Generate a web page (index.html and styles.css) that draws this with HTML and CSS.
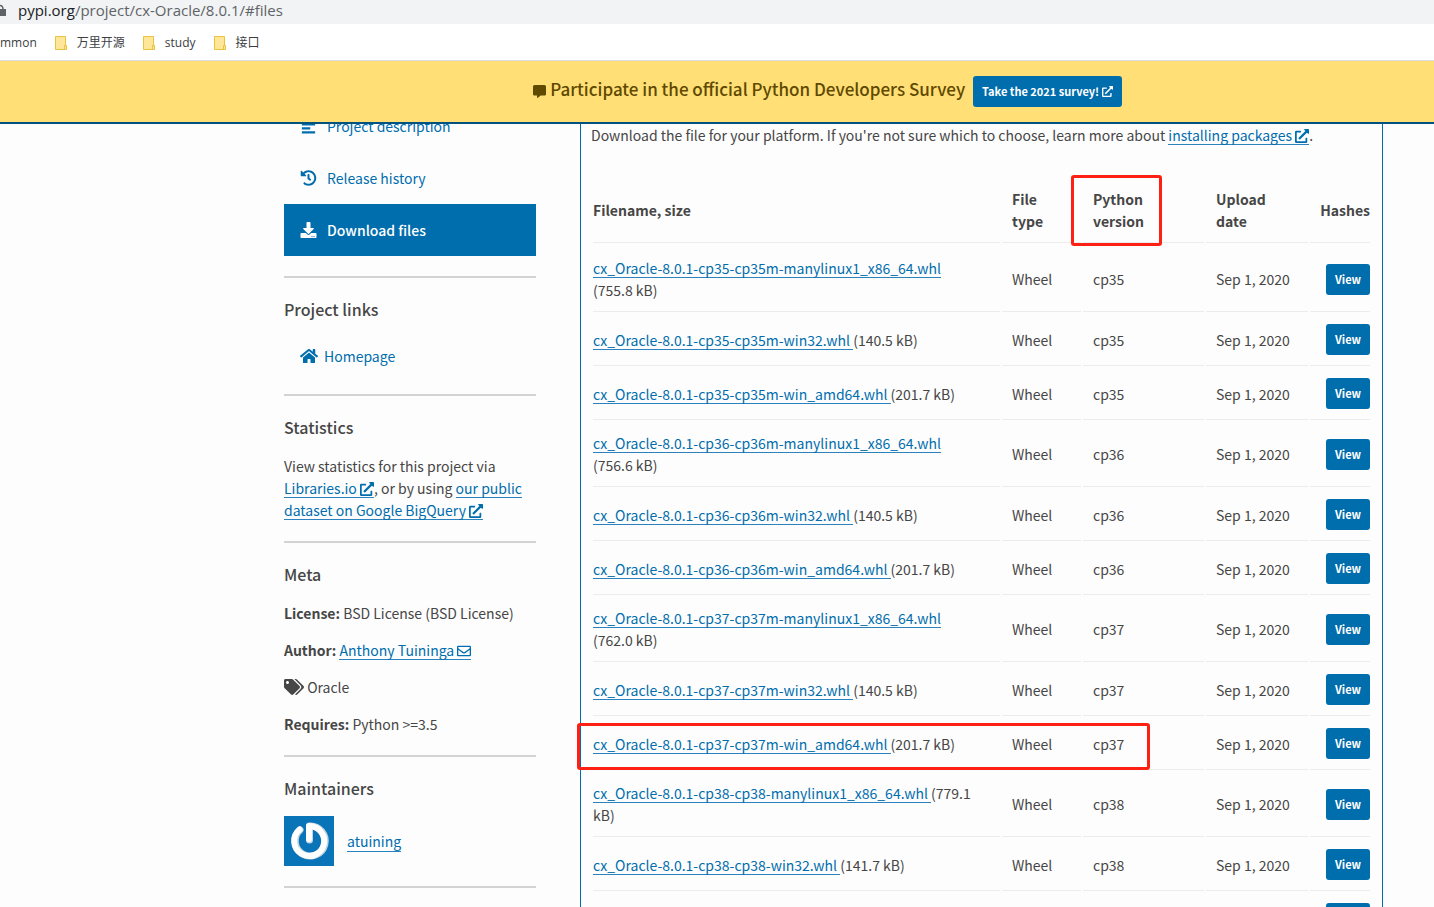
FILE: index.html
```html
<!DOCTYPE html>
<html lang="en">
<head>
  <meta charset="UTF-8">
  <meta name="viewport" content="width=device-width, initial-scale=1.0">
  <title>cx-Oracle · PyPI</title>
  <link rel="stylesheet" href="styles.css">
</head>
<body>
  <svg class="sprite" aria-hidden="true">
    <symbol id="i-external" viewBox="0 0 512 512"><path d="M432 320h-32a16 16 0 0 0-16 16v112H64V128h144a16 16 0 0 0 16-16V80a16 16 0 0 0-16-16H48a48 48 0 0 0-48 48v352a48 48 0 0 0 48 48h352a48 48 0 0 0 48-48V336a16 16 0 0 0-16-16zM488 0H360c-21.370 0-32.050 25.910-17 41l35.730 35.730L135 320.370a24 24 0 0 0 0 34L157.670 377a24 24 0 0 0 34 0l243.610-243.680L471 169c15 15 41 4.500 41-17V24a24 24 0 0 0-24-24z"/></symbol>
    <symbol id="i-comment" viewBox="0 0 512 512"><path d="M448 0H64C28.700 0 0 28.700 0 64v288c0 35.300 28.700 64 64 64h96v84c0 9.800 11.200 15.500 19.100 9.700L304 416h144c35.300 0 64-28.700 64-64V64c0-35.300-28.700-64-64-64z"/></symbol>
    <symbol id="i-align" viewBox="0 0 448 512"><path d="M12 40h268v68H12zM12 168h424v68H12zM12 296h268v68H12zM12 424h424v68H12z"/></symbol>
    <symbol id="i-history" viewBox="0 0 512 512"><path d="M504 255.531c.253 136.640-111.180 248.372-247.820 248.468-59.015.042-113.223-20.530-155.822-54.911-11.077-8.940-11.905-25.541-1.839-35.607l11.267-11.267c8.609-8.609 22.353-9.551 31.891-1.984C173.062 425.135 212.781 440 256 440c101.705 0 184-82.311 184-184 0-101.705-82.311-184-184-184-48.814 0-93.149 18.969-126.068 49.932l50.754 50.754c10.080 10.080 2.941 27.314-11.313 27.314H24c-8.837 0-16-7.163-16-16V38.627c0-14.254 17.234-21.393 27.314-11.314l49.372 49.372C129.209 34.136 189.552 8 256 8c136.810 0 247.747 110.780 248 247.531zm-180.912 78.784l9.823-12.630c8.138-10.463 6.253-25.542-4.210-33.679L288 256.349V152c0-13.255-10.745-24-24-24h-16c-13.255 0-24 10.745-24 24v135.651l65.409 50.874c10.463 8.137 25.541 6.253 33.679-4.210z"/></symbol>
    <symbol id="i-download" viewBox="0 0 512 512"><path d="M216 0h80c13.300 0 24 10.700 24 24v168h87.700c17.800 0 26.700 21.500 14.100 34.100L269.700 378.300c-7.500 7.500-19.800 7.500-27.300 0L90.100 226.100c-12.600-12.600-3.700-34.100 14.100-34.100H192V24c0-13.300 10.700-24 24-24zm296 376v112c0 13.300-10.700 24-24 24H24c-13.300 0-24-10.700-24-24V376c0-13.300 10.700-24 24-24h146.700l49 49c20.100 20.100 52.500 20.100 72.600 0l49-49H488c13.300 0 24 10.700 24 24zm-124 88c0-11-9-20-20-20s-20 9-20 20 9 20 20 20 20-9 20-20zm64 0c0-11-9-20-20-20s-20 9-20 20 9 20 20 20 20-9 20-20z"/></symbol>
    <symbol id="i-home" viewBox="0 0 576 512"><path d="M280.370 148.260L96 300.110V464a16 16 0 0 0 16 16l112.060-.290a16 16 0 0 0 15.920-16V368a16 16 0 0 1 16-16h64a16 16 0 0 1 16 16v95.640a16 16 0 0 0 16 16.050L464 480a16 16 0 0 0 16-16V300L295.670 148.260a12.190 12.190 0 0 0-15.300 0zM571.600 251.470L488 182.560V44.050a12 12 0 0 0-12-12h-56a12 12 0 0 0-12 12v72.610L318.470 43a48 48 0 0 0-61 0L4.340 251.470a12 12 0 0 0-1.600 16.900l25.500 31A12 12 0 0 0 45.150 301l235.220-193.740a12.190 12.190 0 0 1 15.300 0L530.900 301a12 12 0 0 0 16.900-1.600l25.500-31a12 12 0 0 0-1.700-16.930z"/></symbol>
    <symbol id="i-envelope" viewBox="0 0 512 512"><path d="M464 64H48C21.490 64 0 85.490 0 112v288c0 26.510 21.490 48 48 48h416c26.510 0 48-21.490 48-48V112c0-26.510-21.490-48-48-48zm0 48v40.805c-22.422 18.259-58.168 46.651-134.587 106.490-16.841 13.247-50.201 45.072-73.413 44.701-23.208.375-56.579-31.459-73.413-44.701C106.180 199.465 70.425 171.067 48 152.805V112h416zM48 400V214.398c22.914 18.251 55.409 43.862 104.938 82.646 21.857 17.205 60.134 55.186 103.062 54.955 42.717.231 80.509-37.199 103.053-54.947 49.528-38.783 82.032-64.401 104.947-82.653V400H48z"/></symbol>
    <symbol id="i-tags" viewBox="0 0 640 512"><path d="M497.941 225.941L286.059 14.059A48 48 0 0 0 252.118 0H48C21.490 0 0 21.490 0 48v204.118a48 48 0 0 0 14.059 33.941l211.882 211.882c18.744 18.745 49.136 18.746 67.882 0l204.118-204.118c18.745-18.745 18.745-49.137 0-67.882zM112 160c-26.510 0-48-21.490-48-48s21.490-48 48-48 48 21.490 48 48-21.490 48-48 48zm513.941 133.823L421.823 497.941c-18.745 18.745-49.137 18.745-67.882 0l-.360-.360L527.640 323.522c16.999-16.999 26.360-39.600 26.360-63.640s-9.362-46.641-26.360-63.640L331.397 0h48.721a48 48 0 0 1 33.941 14.059l211.882 211.882c18.745 18.745 18.745 49.137 0 67.882z"/></symbol>
    <symbol id="i-folder" viewBox="0 0 12 14"><path d="M.5.5h10v9h1v4H.5z" fill="#ffe699" stroke="#e8c341"/><path d="M9.500 13V9.500h2" fill="none" stroke="#e8c341"/></symbol>
  </svg>

  <div class="address-bar">
    <svg class="lock" viewBox="0 0 6 12"><path d="M0 5h6v7H0z" fill="#5f6368"/><path d="M0 1.500q3 0 3 4" fill="none" stroke="#5f6368" stroke-width="1.500"/></svg>
    <span class="url"><span class="host">pypi.org</span>/project/cx-Oracle/8.0.1/#files</span>
  </div>
  <nav class="bookmarks">
    <a href="#">mmon</a>
    <a href="#"><svg class="folder"><use href="#i-folder"/></svg>万里开源</a>
    <a href="#"><svg class="folder"><use href="#i-folder"/></svg>study</a>
    <a href="#"><svg class="folder"><use href="#i-folder"/></svg>接口</a>
  </nav>

  <div class="banner">
    <p class="banner-text">
      <svg class="banner-icon"><use href="#i-comment"/></svg>
      Participate in the official Python Developers Survey
      <a class="button" href="#">Take the 2021 survey! <svg class="icon-small"><use href="#i-external"/></svg></a>
    </p>
  </div>

  <main class="page">
    <aside class="sidebar">
      <nav class="tabs">
        <a class="tab" href="#description"><svg class="icon"><use href="#i-align"/></svg>Project description</a>
        <a class="tab" href="#history"><svg class="icon"><use href="#i-history"/></svg>Release history</a>
        <a class="tab active" href="#files"><svg class="icon"><use href="#i-download"/></svg>Download files</a>
      </nav>

      <section class="side-section">
        <h3>Project links</h3>
        <a class="home-link" href="#"><svg class="icon-home"><use href="#i-home"/></svg>Homepage</a>
      </section>

      <section class="side-section">
        <h3>Statistics</h3>
        <p>View statistics for this project via <a class="link" href="#">Libraries.io <svg class="icon-ext"><use href="#i-external"/></svg></a>, or by using <a class="link" href="#">our public dataset on Google BigQuery <svg class="icon-ext"><use href="#i-external"/></svg></a></p>
      </section>

      <section class="side-section">
        <h3>Meta</h3>
        <p><strong>License:</strong> BSD License (BSD License)</p>
        <p><strong>Author:</strong> <a class="link" href="#">Anthony Tuininga <svg class="icon-ext"><use href="#i-envelope"/></svg></a></p>
        <p><svg class="icon-tags"><use href="#i-tags"/></svg> Oracle</p>
        <p><strong>Requires:</strong> Python &gt;=3.5</p>
      </section>

      <section class="side-section">
        <h3>Maintainers</h3>
        <div class="maintainer">
          <svg class="avatar" viewBox="0 0 50 50">
            <rect width="50" height="50" fill="#0a74b9"/>
            <path d="M16 14A15 15 0 1 0 25.500 10V24" fill="none" stroke="#c5d5e0" stroke-width="7" stroke-linecap="round" stroke-linejoin="round"/>
            <path d="M15.500 13.500A15 15 0 1 0 25 10V23" fill="none" stroke="#fff" stroke-width="6" stroke-linecap="round" stroke-linejoin="round"/>
          </svg>
          <a class="link" href="#">atuining</a>
        </div>
      </section>
      <section class="side-section"></section>
    </aside>

    <section class="content" id="files">
      <p>Download the file for your platform. If you're not sure which to choose, learn more about <a class="link" href="#">installing packages <svg class="icon-ext"><use href="#i-external"/></svg></a>.</p>

      <table class="files">
        <colgroup>
          <col>
          <col class="col-type">
          <col class="col-version">
          <col class="col-date">
          <col class="col-hashes">
        </colgroup>
        <thead>
          <tr>
            <th>Filename, size</th>
            <th>File type</th>
            <th class="marked">Python version</th>
            <th>Upload date</th>
            <th>Hashes</th>
          </tr>
        </thead>
        <tbody>
          <tr>
            <td><a class="link" href="#">cx_Oracle-8.0.1-cp35-cp35m-manylinux1_x86_64.whl </a>(755.8 kB)</td>
            <td>Wheel</td>
            <td>cp35</td>
            <td>Sep 1, 2020</td>
            <td><button class="button">View</button></td>
          </tr>
          <tr>
            <td><a class="link" href="#">cx_Oracle-8.0.1-cp35-cp35m-win32.whl </a>(140.5 kB)</td>
            <td>Wheel</td>
            <td>cp35</td>
            <td>Sep 1, 2020</td>
            <td><button class="button">View</button></td>
          </tr>
          <tr>
            <td><a class="link" href="#">cx_Oracle-8.0.1-cp35-cp35m-win_amd64.whl </a>(201.7 kB)</td>
            <td>Wheel</td>
            <td>cp35</td>
            <td>Sep 1, 2020</td>
            <td><button class="button">View</button></td>
          </tr>
          <tr>
            <td><a class="link" href="#">cx_Oracle-8.0.1-cp36-cp36m-manylinux1_x86_64.whl </a>(756.6 kB)</td>
            <td>Wheel</td>
            <td>cp36</td>
            <td>Sep 1, 2020</td>
            <td><button class="button">View</button></td>
          </tr>
          <tr>
            <td><a class="link" href="#">cx_Oracle-8.0.1-cp36-cp36m-win32.whl </a>(140.5 kB)</td>
            <td>Wheel</td>
            <td>cp36</td>
            <td>Sep 1, 2020</td>
            <td><button class="button">View</button></td>
          </tr>
          <tr>
            <td><a class="link" href="#">cx_Oracle-8.0.1-cp36-cp36m-win_amd64.whl </a>(201.7 kB)</td>
            <td>Wheel</td>
            <td>cp36</td>
            <td>Sep 1, 2020</td>
            <td><button class="button">View</button></td>
          </tr>
          <tr>
            <td><a class="link" href="#">cx_Oracle-8.0.1-cp37-cp37m-manylinux1_x86_64.whl </a>(762.0 kB)</td>
            <td>Wheel</td>
            <td>cp37</td>
            <td>Sep 1, 2020</td>
            <td><button class="button">View</button></td>
          </tr>
          <tr>
            <td><a class="link" href="#">cx_Oracle-8.0.1-cp37-cp37m-win32.whl </a>(140.5 kB)</td>
            <td>Wheel</td>
            <td>cp37</td>
            <td>Sep 1, 2020</td>
            <td><button class="button">View</button></td>
          </tr>
          <tr>
            <td class="marked-row"><a class="link" href="#">cx_Oracle-8.0.1-cp37-cp37m-win_amd64.whl </a>(201.7 kB)</td>
            <td>Wheel</td>
            <td>cp37</td>
            <td>Sep 1, 2020</td>
            <td><button class="button">View</button></td>
          </tr>
          <tr>
            <td><a class="link" href="#">cx_Oracle-8.0.1-cp38-cp38-manylinux1_x86_64.whl </a>(779.1 kB)</td>
            <td>Wheel</td>
            <td>cp38</td>
            <td>Sep 1, 2020</td>
            <td><button class="button">View</button></td>
          </tr>
          <tr>
            <td><a class="link" href="#">cx_Oracle-8.0.1-cp38-cp38-win32.whl </a>(141.7 kB)</td>
            <td>Wheel</td>
            <td>cp38</td>
            <td>Sep 1, 2020</td>
            <td><button class="button">View</button></td>
          </tr>
          <tr>
            <td></td>
            <td></td>
            <td></td>
            <td></td>
            <td><button class="button">View</button></td>
          </tr>
        </tbody>
      </table>
    </section>
  </main>
</body>
</html>
```
FILE: styles.css
```css
*,
*::before,
*::after {
  box-sizing: border-box;
}

body {
  margin: 0;
  height: 100vh;
  display: flex;
  flex-direction: column;
  overflow: hidden;
  background-color: #fdfdfd;
  color: #464646;
  font-family: "Noto Sans CJK SC", sans-serif;
  font-size: 14px;
  line-height: 22px;
}

h3, p {
  margin: 0;
}

a {
  color: #006dad;
  text-decoration: none;
}

svg {
  fill: currentColor;
}

.sprite {
  position: absolute;
  width: 0;
  height: 0;
}

/* browser chrome */
.address-bar {
  flex: none;
  display: flex;
  align-items: center;
  gap: 12px;
  height: 24px;
  padding-bottom: 4px;
  background-color: #f1f3f4;
}

.lock {
  width: 6px;
  height: 12px;
}

.url {
  font-family: "Open Sans", sans-serif;
  font-size: 15px;
  line-height: 20px;
  color: #5f6368;
}

.host {
  color: #202124;
}

.bookmarks {
  flex: none;
  display: flex;
  align-items: center;
  gap: 18px;
  height: 37px;
  padding-top: 1px;
  background-color: #fff;
  border-bottom: 1px solid #dadce0;
}

.bookmarks a {
  display: flex;
  align-items: center;
  gap: 10px;
  color: #3c4043;
  font-family: "Open Sans", "Noto Sans CJK SC", sans-serif;
  font-size: 12px;
}

.folder {
  width: 12px;
  height: 14px;
}

/* survey banner */
.banner {
  flex: none;
  display: flex;
  align-items: center;
  justify-content: center;
  height: 63px;
  padding-left: 221px;
  background-color: #ffdf76;
  border-bottom: 2px solid #00527f;
  color: #604900;
}

.banner-icon {
  width: 13px;
  height: 13px;
  vertical-align: -2px;
}

.banner-text {
  font-size: 17px;
  font-weight: 500;
}

.banner .button {
  margin-left: 4px;
  vertical-align: baseline;
}

.button {
  display: inline-block;
  height: 31px;
  padding: 0 9px;
  border: none;
  border-radius: 3px;
  background-color: #006dad;
  color: #fff;
  font-family: inherit;
  font-size: 11px;
  font-weight: bold;
  line-height: 31px;
  vertical-align: middle;
  cursor: pointer;
}

.icon-small {
  width: 11px;
  height: 11px;
  vertical-align: -1px;
}

/* page */
.page {
  flex: 1;
  min-height: 0;
  display: flex;
  align-items: flex-start;
  gap: 44px;
  padding: 0 51px 0 284px;
  overflow: hidden;
}

.sidebar {
  flex: none;
  width: 252px;
  margin-top: -24px;
}

.tabs {
  margin-bottom: 20px;
}

.tab {
  display: flex;
  align-items: center;
  gap: 10px;
  height: 52px;
  padding: 0 16px;
}

.tab.active {
  background-color: #006dad;
  color: #fff;
  font-weight: 500;
}

.icon {
  width: 17px;
  height: 16px;
}

.side-section {
  padding: 20px 0;
  border-top: 2px solid #d3d3d3;
}

.side-section h3 {
  margin-bottom: 17px;
  font-size: 16px;
  font-weight: 500;
  line-height: 22px;
}

.side-section p + p {
  margin-top: 15px;
}

.home-link {
  display: flex;
  align-items: center;
  gap: 6px;
  padding: 8px 16px 7px;
}

.icon-home {
  width: 18px;
  height: 16px;
}

.icon-ext {
  width: 14px;
  height: 14px;
  vertical-align: -2px;
}

.icon-tags {
  width: 20px;
  height: 16px;
  vertical-align: -2px;
}

.link {
  background: linear-gradient(#2c82bd, #2c82bd) 0 100% / 100% 1px no-repeat;
}

.maintainer {
  display: flex;
  align-items: center;
  gap: 13px;
}

.avatar {
  width: 50px;
  height: 50px;
}

/* files table */
.content {
  flex: 1;
  min-width: 0;
  padding: 0 10px 20px;
  border: solid #006dad;
  border-width: 0 1px;
}

.files {
  width: 100%;
  margin-top: 30px;
  table-layout: fixed;
  border-collapse: separate;
  border-spacing: 2px;
}

.col-type {
  width: 79px;
}

.col-version {
  width: 121px;
}

.col-date {
  width: 102px;
}

.col-hashes {
  width: 60px;
}

.files th,
.files td {
  padding: 10px;
  border-bottom: 1px solid #ececec;
  text-align: left;
  vertical-align: middle;
}

.files th:first-child,
.files td:first-child {
  padding-left: 0;
  padding-right: 20px;
}

.files th:last-child,
.files td:last-child {
  padding-left: 0;
  padding-right: 0;
  text-align: right;
}

.files tbody tr:first-child td {
  padding-top: 12px;
}

/* red highlight frames */
.marked,
.marked-row {
  position: relative;
}

.marked::after,
.marked-row::after {
  content: "";
  position: absolute;
  z-index: 1;
  border: 3px solid #ff2014;
  border-radius: 3px;
  pointer-events: none;
}

.marked::after {
  top: -3px;
  bottom: -4px;
  left: -12px;
  width: 91px;
}

.marked-row::after {
  top: 5px;
  bottom: -1px;
  left: -16px;
  width: calc(100% + 166px);
}
```
